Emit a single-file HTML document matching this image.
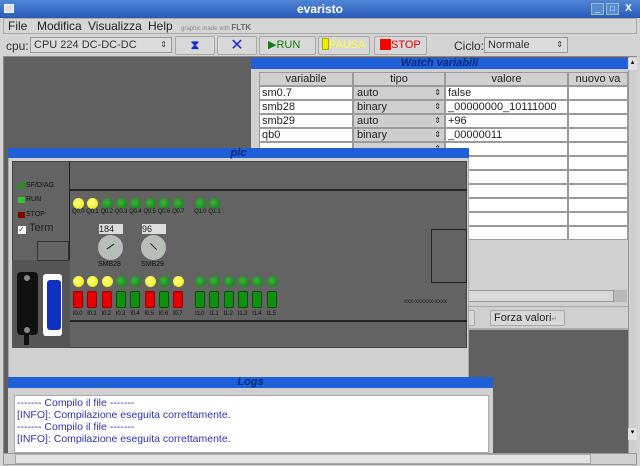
<!DOCTYPE html>
<html><head><meta charset="utf-8"><style>
*{margin:0;padding:0;box-sizing:border-box}
body{width:640px;height:466px;overflow:hidden;background:#d4d4d4;font-family:"Liberation Sans","DejaVu Sans",sans-serif;font-size:11px;position:relative;color:#000}
.a{position:absolute}
.tb{background:linear-gradient(#4f86d6,#2a5bb8);}
.wt{background:#1f5fd8;color:#0a2a7a;font-style:italic;font-weight:bold;text-align:center;font-size:11px;line-height:11px}
.btn{background:#d8d8d8;border:1px solid #a8a8a8;border-radius:2px}
.cell{position:absolute;background:#fff;border:1px solid #9a9a9a;height:14px;font-size:11px;line-height:12px;padding-left:2px;color:#222}
.hd{position:absolute;background:#d0d0d0;border:1px solid #9a9a9a;height:14px;text-align:center;line-height:12px;color:#222}
.ch{position:absolute;background:#cfcfcf;border:1px solid #9a9a9a;height:14px;line-height:12px;padding-left:3px;color:#222}
.led{position:absolute;width:11px;height:11px;border-radius:50%}
.y{background:radial-gradient(circle at 40% 40%,#ffff80,#e8e800)}
.g{background:radial-gradient(circle at 40% 40%,#40b040,#0a7a0a)}
.r{position:absolute;width:10px;height:17px;border-radius:2px}
.rr{background:#e80000;border:1px solid #900}
.rg{background:#109010;border:1px solid #050}
.lb{position:absolute;font-size:6px;color:#111;letter-spacing:-0.2px}
</style></head><body>
<div class="a tb" style="left:0;top:0;width:640px;height:18px"></div>
<div class="a" style="left:4px;top:4px;width:10px;height:9px;background:#dde;border:1px solid #fff"></div>
<div class="a" style="left:0;top:2px;width:640px;text-align:center;color:#fff;font-size:12px;font-weight:bold">evaristo</div>
<div class="a" style="left:591px;top:3px;width:13px;height:12px;border:1px solid #9bb;background:#5a8ad0;color:#fff;font-size:8px;text-align:center">_</div>
<div class="a" style="left:606px;top:3px;width:13px;height:12px;border:1px solid #9bb;background:#5a8ad0;color:#fff;font-size:8px;text-align:center">□</div>
<div class="a" style="left:621px;top:3px;width:15px;height:12px;color:#fff;font-size:10px;text-align:center;font-weight:bold">X</div>
<div class="a" style="left:3px;top:18px;width:634px;height:16px;border:1px solid #aaa;background:#d6d6d6"></div>
<div class="a" style="left:8px;top:19px;font-size:12px;color:#222">File</div>
<div class="a" style="left:37px;top:19px;font-size:12px;color:#222">Modifica</div>
<div class="a" style="left:88px;top:19px;font-size:12px;color:#222">Visualizza</div>
<div class="a" style="left:148px;top:19px;font-size:12px;color:#222">Help</div>
<div class="a" style="left:181px;top:23px;font-size:6px;color:#888">graphic made with <b style="color:#666;font-size:8px">FLTK</b></div>
<div class="a" style="left:6px;top:39px;font-size:12px;color:#333">cpu:</div>
<div class="a" style="left:30px;top:37px;width:142px;height:16px;border:1px solid #999;background:#dcdcdc;font-size:11px;line-height:14px;padding-left:3px;color:#333">CPU 224 DC-DC-DC<span style="position:absolute;right:4px;font-size:8px">⇕</span></div>
<div class="a btn" style="left:175px;top:36px;width:40px;height:19px;color:#1a2ad0;text-align:center;font-weight:bold;font-size:12px;line-height:17px">⧗</div>
<div class="a btn" style="left:217px;top:36px;width:40px;height:19px;color:#1a2ad0;text-align:center;font-weight:bold;font-size:16px;line-height:17px">✕</div>
<div class="a btn" style="left:259px;top:36px;width:57px;height:19px;color:#108010;font-size:11px;line-height:17px;padding-left:8px"><span style="font-size:11px">▶</span>RUN</div>
<div class="a btn" style="left:318px;top:36px;width:52px;height:19px;color:#ffff40;font-size:11px;line-height:17px;padding-left:3px"><span style="display:inline-block;width:7px;height:12px;background:#ee0;border:1px solid #aa0;vertical-align:-2px"></span>PAUSA</div>
<div class="a btn" style="left:374px;top:36px;width:53px;height:19px;color:#e00000;font-size:11px;line-height:17px;padding-left:5px"><span style="display:inline-block;width:11px;height:11px;background:#f00;vertical-align:-2px"></span>STOP</div>
<div class="a" style="left:454px;top:39px;font-size:12px;color:#333">Ciclo:</div>
<div class="a" style="left:484px;top:37px;width:84px;height:16px;border:1px solid #999;background:#dcdcdc;font-size:11px;line-height:14px;padding-left:3px;color:#333">Normale<span style="position:absolute;right:4px;font-size:8px">⇕</span></div>
<div class="a" style="left:3px;top:56px;width:634px;height:398px;background:#606060;border:1px solid #888"></div>
<div class="a" style="left:251px;top:58px;width:377px;height:272px;background:#d0d0d0"></div>
<div class="a wt" style="left:251px;top:58px;width:377px;height:11px">Watch variabili</div>
<div id="watch"></div>
<div class="a" style="left:259px;top:290px;width:355px;height:12px;background:#d8d8d8;border:1px solid #999"></div>
<div class="a" style="left:614px;top:290px;width:13px;height:12px;background:#b8b8b8"></div>
<div class="a" style="left:251px;top:306px;width:377px;height:1px;background:#aaa"></div>
<div class="a btn" style="left:455px;top:310px;width:20px;height:16px"></div>
<div class="a btn" style="left:490px;top:310px;width:75px;height:16px;font-size:11px;line-height:14px;padding-left:3px;color:#222">Forza valori<span style="font-size:7px;color:#888">↵</span></div>
<div class="a" style="left:251px;top:328px;width:377px;height:2px;background:#aaa"></div>
<div class="a" style="left:628px;top:57px;width:9px;height:396px;background:#cfcfcf;border-left:1px solid #999"></div>
<div class="a" style="left:628px;top:58px;width:9px;height:12px;background:#e0e0e0;font-size:7px;text-align:center">▴</div>
<div class="a" style="left:628px;top:428px;width:9px;height:12px;background:#e0e0e0;font-size:7px;text-align:center">▾</div>
<div class="a" style="left:8px;top:148px;width:461px;height:232px;background:#d0d0d0;border:1px solid #aaa"></div>
<div class="a wt" style="left:8px;top:148px;width:461px;height:10px;line-height:10px">plc</div>
<div class="a" style="left:12px;top:161px;width:455px;height:187px;background:#636363;border:1px solid #444"></div>
<div class="a" style="left:69px;top:161px;width:1px;height:187px;background:#222"></div>
<div class="a" style="left:70px;top:189px;width:397px;height:2px;background:#222"></div>
<div class="a" style="left:70px;top:320px;width:397px;height:2px;background:#222"></div>
<div class="a" style="left:12px;top:260px;width:58px;height:88px;background:#555"></div>
<div class="a" style="left:37px;top:241px;width:32px;height:20px;border:1px solid #333;background:#646464"></div>
<div class="a" style="left:431px;top:229px;width:36px;height:54px;border:1px solid #222"></div>
<div class="a" style="left:404px;top:299px;font-size:6px;color:#222">xxx-xxxxxx-xxxx</div>
<div class="a" style="left:18px;top:183px;width:7px;height:6px;background:#2a8a2a"></div>
<div class="a" style="left:26px;top:182px;font-size:7px;color:#111">SF/DIAG</div>
<div class="a" style="left:18px;top:197px;width:7px;height:6px;background:#30c030"></div>
<div class="a" style="left:26px;top:196px;font-size:7px;color:#111">RUN</div>
<div class="a" style="left:18px;top:212px;width:7px;height:6px;background:#800000"></div>
<div class="a" style="left:26px;top:211px;font-size:7px;color:#111">STOP</div>
<div class="a" style="left:18px;top:226px;width:8px;height:8px;background:#fff;font-size:8px;line-height:8px;color:#236">✓</div>
<div class="a" style="left:29px;top:222px;font-size:11px;color:#222">Term</div>
<div class="a" style="left:17px;top:272px;width:21px;height:63px;background:#111;border-radius:4px"></div>
<div class="a" style="left:24px;top:275px;width:6px;height:6px;background:#888;border-radius:50%"></div>
<div class="a" style="left:24px;top:327px;width:6px;height:6px;background:#888;border-radius:50%"></div>
<div class="a" style="left:24px;top:335px;width:5px;height:10px;background:#111"></div>
<div class="a" style="left:43px;top:274px;width:19px;height:62px;background:#fff;border-radius:3px"></div>
<div class="a" style="left:47px;top:280px;width:14px;height:50px;background:#1030c0;border-radius:3px"></div>
<div class="a" style="left:99px;top:224px;width:24px;height:10px;background:#ddd;font-size:9px;line-height:10px;color:#222">184</div>
<div class="a" style="left:98px;top:235px;width:25px;height:25px;border-radius:50%;background:#b8beb8"></div>
<div class="a" style="left:106px;top:246px;width:9px;height:1px;background:#222;transform:rotate(-35deg)"></div>
<div class="a" style="left:98px;top:261px;font-size:7px;color:#111">SMB28</div>
<div class="a" style="left:142px;top:224px;width:24px;height:10px;background:#ddd;font-size:9px;line-height:10px;color:#222">96</div>
<div class="a" style="left:141px;top:235px;width:25px;height:25px;border-radius:50%;background:#b8beb8"></div>
<div class="a" style="left:149px;top:246px;width:9px;height:1px;background:#222;transform:rotate(45deg)"></div>
<div class="a" style="left:141px;top:261px;font-size:7px;color:#111">SMB29</div>
<div id="leds"></div>
<div class="a" style="left:8px;top:377px;width:485px;height:77px;background:#d0d0d0"></div>
<div class="a wt" style="left:8px;top:377px;width:485px;height:11px">Logs</div>
<div class="a" style="left:14px;top:395px;width:475px;height:58px;background:#fff;border:1px solid #aaa;color:#3030b0;font-size:10.5px;line-height:12px;padding:1px 2px">------- Compilo il file -------<br>[INFO]: Compilazione eseguita correttamente.<br>------- Compilo il file -------<br>[INFO]: Compilazione eseguita correttamente.</div>
<div class="a" style="left:3px;top:453px;width:634px;height:12px;background:#d0d0d0;border:1px solid #999"></div>
<div class="a" style="left:15px;top:454px;width:576px;height:10px;background:#e4e4e4;border:1px solid #aaa"></div>
<script>
(function(){
var w='',cols=[[259,94],[353,92],[445,123],[568,60]];
var hd=['variabile','tipo','valore','nuovo va'];
for(var i=0;i<4;i++)w+='<div class="hd" style="left:'+cols[i][0]+'px;top:72px;width:'+cols[i][1]+'px">'+hd[i]+'</div>';
var rows=[['sm0.7','auto','false'],['smb28','binary','_00000000_10111000'],['smb29','auto','+96'],['qb0','binary','_00000011']];
for(var r=0;r<11;r++){var y=86+r*14,d=rows[r]||['','',''];
w+='<div class="cell" style="left:259px;top:'+y+'px;width:94px">'+d[0]+'</div>';
w+='<div class="ch" style="left:353px;top:'+y+'px;width:92px">'+d[1]+'<span style="position:absolute;right:3px;font-size:8px">⇕</span></div>';
w+='<div class="cell" style="left:445px;top:'+y+'px;width:123px">'+d[2]+'</div>';
w+='<div class="cell" style="left:568px;top:'+y+'px;width:60px"></div>';}
document.getElementById('watch').innerHTML=w;
var s='',tl=['y','y','g','g','g','g','g','g'],bl=['y','y','y','g','g','y','g','y'],rb=['rr','rr','rr','rg','rg','rr','rg','rr'];
for(var i=0;i<8;i++){var x=73+i*14.3;
s+='<div class="led '+tl[i]+'" style="left:'+x+'px;top:198px"></div>';
s+='<div class="lb" style="left:'+(x-1)+'px;top:209px">Q0.'+i+'</div>';
s+='<div class="led '+bl[i]+'" style="left:'+x+'px;top:276px"></div>';
s+='<div class="r '+rb[i]+'" style="left:'+x+'px;top:291px"></div>';
s+='<div class="lb" style="left:'+x+'px;top:311px">I0.'+i+'</div>';}
for(var i=0;i<2;i++){var x=195+i*14.3;s+='<div class="led g" style="left:'+x+'px;top:198px"></div><div class="lb" style="left:'+(x-1)+'px;top:209px">Q1.'+i+'</div>';}
for(var i=0;i<6;i++){var x=195+i*14.3;s+='<div class="led g" style="left:'+x+'px;top:276px"></div><div class="r rg" style="left:'+x+'px;top:291px"></div><div class="lb" style="left:'+x+'px;top:311px">I1.'+i+'</div>';}
document.getElementById('leds').innerHTML=s;
})();
</script>
</body></html>
